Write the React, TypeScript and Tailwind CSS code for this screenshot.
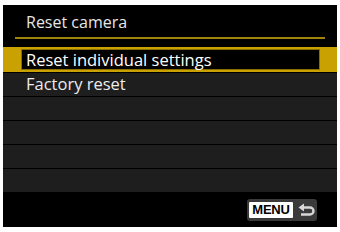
import React from 'react';

const rows = ['Reset individual settings', 'Factory reset', '', '', '', ''];

const ReturnIcon: React.FC = () => (
  <svg width="17" height="14" viewBox="0 0 17 14" fill="none">
    <path d="M3 4.5 H12 A3.5 3.5 0 0 1 12 11.5 H3" stroke="#d8d8d8" strokeWidth="2.4" />
    <path d="M0.5 4.5 L6 0.5 L6 8.5 Z" fill="#d8d8d8" />
  </svg>
);

const App: React.FC = () => {
  return (
    <div className="w-[340px] h-[232px] bg-white pt-[5px] pl-[3px]" style={{ fontFamily: '"Open Sans", "Noto Sans", sans-serif' }}>
      <div className="w-[334px] h-[222px] bg-black flex flex-col">
        <div className="h-[32px] pl-[23px] pt-[6px] text-[16px] leading-[22px] text-[#e6e6e6]">Reset camera</div>
        <div className="mx-[12px] h-[2px] bg-[#a08410]" />
        <div className="h-[8px]" />
        <div className="flex flex-col gap-px">
          {rows.map((r, i) =>
            i === 0 ? (
              <div key={i} className="h-[25px] bg-[#c9a100] pl-[18px] pr-[17px] py-[2px]">
                <div className="h-full bg-black border border-[#8a6e00] pl-[4px] text-[16.5px] leading-[20px] text-white">{r}</div>
              </div>
            ) : (
              <div key={i} className="h-[23px] bg-[#1e1e1e] pl-[23px] text-[16.5px] leading-[22px] text-[#ececec]">{r}</div>
            )
          )}
        </div>
        <div className="flex-1 flex justify-end items-center pr-[20px]">
          <div className="h-[22px] w-[70px] rounded-[3px] bg-[#3a3a3a] flex items-center px-[2px] gap-[5px]">
            <div className="h-[16px] w-[44px] bg-white rounded-[1px] text-black text-[13px] font-bold leading-[16px] text-center tracking-[-0.2px]" style={{ fontFamily: '"Liberation Sans", sans-serif' }}>MENU</div>
            <ReturnIcon />
          </div>
        </div>
      </div>
    </div>
  );
};

export default App;
